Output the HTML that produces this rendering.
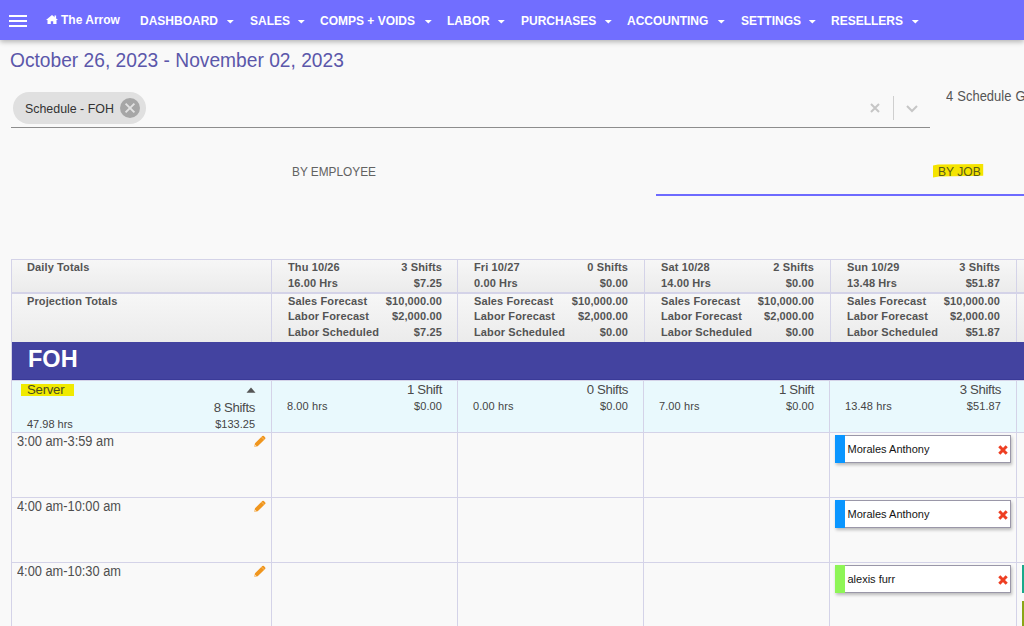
<!DOCTYPE html>
<html><head><meta charset="utf-8">
<style>
*{box-sizing:border-box;margin:0;padding:0}
html,body{width:1024px;height:626px;overflow:hidden;background:#f9f9f9;font-family:"Liberation Sans",sans-serif;position:relative}
.a{position:absolute;white-space:nowrap}
#nav{position:absolute;left:0;top:0;width:1024px;height:40px;background:#716eff;box-shadow:0 2px 5px rgba(0,0,0,.28)}
.ham{position:absolute;left:9px;width:18px;height:2px;background:#fff}
.ni{position:absolute;top:14px;font-size:12px;font-weight:bold;color:#fff;line-height:14px;white-space:nowrap}
.car{position:absolute;top:20px;width:7px;height:3.6px;background:#fff;clip-path:polygon(0 0,100% 0,50% 100%);margin-left:-0.2px}
.col{position:absolute;top:259px;width:1px;height:367px;background:#d4d3e8}
.hr{position:absolute;left:11px;width:1013px;height:1px;background:#d4d3e8}
.hc{position:absolute;font-size:11px;font-weight:bold;color:#545454;letter-spacing:0.12px;line-height:13px;white-space:nowrap}
.r{text-align:right}
.card{position:absolute;width:176px;height:28px;background:#fff;border:1px solid #9a97a8;box-shadow:1px 2px 3px rgba(0,0,0,.25)}
.card .bar{position:absolute;left:-1px;top:-1px;bottom:-1px;width:10px}
.card .nm{position:absolute;left:11.5px;top:7px;font-size:11px;color:#141414;line-height:13px;white-space:nowrap}
.card .x{position:absolute;right:2px;top:8.5px;width:10px;height:10px}
.pen{position:absolute;left:254px;width:12px;height:11px}
.tm{position:absolute;left:17px;font-size:14px;transform:scaleX(0.915);transform-origin:0 0;color:#4e4e4e;line-height:16px;white-space:nowrap}
</style></head><body>
<div id="nav">
  <div class="ham" style="top:15px"></div>
  <div class="ham" style="top:20px"></div>
  <div class="ham" style="top:25px"></div>
  <svg class="a" style="left:46px;top:14.5px" width="12" height="9" viewBox="0 0 12 9"><path d="M6 0 L12 5 L10.5 5 L10.5 9 L7.2 9 L7.2 6.3 L4.8 6.3 L4.8 9 L1.5 9 L1.5 5 L0 5 Z" fill="#fff"/><rect x="8.5" y="0.5" width="1.6" height="3" fill="#fff"/></svg>
  <div class="ni" style="left:61px;top:13px">The Arrow</div>
  <div class="ni" style="left:140px">DASHBOARD</div><div class="car" style="left:227px"></div>
  <div class="ni" style="left:250px">SALES</div><div class="car" style="left:298px"></div>
  <div class="ni" style="left:320px">COMPS + VOIDS</div><div class="car" style="left:425px"></div>
  <div class="ni" style="left:447px">LABOR</div><div class="car" style="left:498px"></div>
  <div class="ni" style="left:521px">PURCHASES</div><div class="car" style="left:605px"></div>
  <div class="ni" style="left:627px">ACCOUNTING</div><div class="car" style="left:718px"></div>
  <div class="ni" style="left:741px">SETTINGS</div><div class="car" style="left:809px"></div>
  <div class="ni" style="left:831px">RESELLERS</div><div class="car" style="left:912px"></div>
</div>

<div class="a" style="left:10px;top:49px;font-size:19.8px;line-height:22px;color:#5b57aa;transform:scaleX(0.97);transform-origin:0 0">October 26, 2023 - November 02, 2023</div>

<!-- chip -->
<div class="a" style="left:13px;top:92px;width:133px;height:32px;border-radius:16px;background:#e0e0e0"></div>
<div class="a" style="left:25px;top:102px;font-size:12.4px;line-height:14px;color:#333">Schedule - FOH</div>
<svg class="a" style="left:120px;top:98px" width="20" height="20" viewBox="0 0 20 20"><circle cx="10" cy="10" r="10" fill="#a6a6a6"/><path d="M5.6 5.6 L14.4 14.4 M14.4 5.6 L5.6 14.4" stroke="#e2e2e2" stroke-width="1.9"/></svg>
<div class="a" style="left:11px;top:127px;width:919px;height:1px;background:#8d8d8d"></div>
<svg class="a" style="left:870px;top:103px" width="10" height="10" viewBox="0 0 10 10"><path d="M1 1 L9 9 M9 1 L1 9" stroke="#c6c6c6" stroke-width="2"/></svg>
<div class="a" style="left:893px;top:96px;width:1px;height:24px;background:#cfcfcf"></div>
<svg class="a" style="left:906px;top:105px" width="12" height="8" viewBox="0 0 12 8"><path d="M1 1 L6 6 L11 1" stroke="#c6c6c6" stroke-width="2" fill="none"/></svg>
<div class="a" style="left:946px;top:89px;font-size:14px;line-height:15px;color:#555;word-spacing:0.6px;transform:scaleX(0.925);transform-origin:0 0">4 Schedule Groups</div>

<!-- tabs -->
<div class="a" style="left:292px;top:165px;font-size:13px;line-height:14px;color:#626262;transform:scaleX(0.91);transform-origin:0 0">BY EMPLOYEE</div>
<svg class="a" style="left:933px;top:164px" width="51" height="15" viewBox="0 0 51 15"><path d="M0 1.6 L5 0.6 L50.2 0 L50.2 11.7 L6 12.4 L0 13.6 Z" fill="#f5e400"/></svg>
<div class="a" style="left:938px;top:165px;font-size:13px;transform:scaleX(0.93);transform-origin:0 0;line-height:14px;color:#5a5a1a">BY JOB</div>
<div class="a" style="left:656px;top:194px;width:368px;height:2px;background:#6e6bff"></div>

<!-- table header bg -->
<div class="a" style="left:11px;top:259px;width:1013px;height:34px;background:linear-gradient(#f7f7f7,#ebebeb)"></div>
<div class="a" style="left:11px;top:293px;width:1013px;height:49px;background:linear-gradient(#f7f7f7,#ebebeb)"></div>
<div class="a" style="left:11px;top:380px;width:1013px;height:52px;background:#e9f9fd"></div>

<div class="hr" style="top:259px"></div>
<div class="hr" style="top:292px;height:2px"></div>
<div class="hr" style="top:380px"></div>
<div class="hr" style="top:432px"></div>
<div class="hr" style="top:497px"></div>
<div class="hr" style="top:562px"></div>

<div class="col" style="left:11px;top:259px;height:367px"></div>
<div class="col" style="left:271px;top:259px;height:83px"></div>
<div class="col" style="left:457px;top:259px;height:83px"></div>
<div class="col" style="left:644px;top:259px;height:83px"></div>
<div class="col" style="left:830px;top:259px;height:83px"></div>
<div class="col" style="left:1016px;top:259px;height:83px"></div>
<div class="col" style="left:271px;top:380px;height:246px"></div>
<div class="col" style="left:457px;top:380px;height:246px"></div>
<div class="col" style="left:643px;top:380px;height:246px"></div>
<div class="col" style="left:829px;top:380px;height:246px"></div>
<div class="col" style="left:1016px;top:380px;height:246px"></div>
<div class="a" style="left:12px;top:342px;width:1012px;height:38px;background:#4343a0"></div>
<div class="a" style="left:12px;top:379px;width:1012px;height:1px;background:#3a3a98"></div>

<div class="hc" style="left:27px;top:261px">Daily Totals</div>
<div class="hc" style="left:27px;top:295px">Projection Totals</div>

<!-- FOH -->
<div class="a" style="left:28px;top:345px;font-size:23.5px;font-weight:bold;color:#fff;line-height:28px">FOH</div>

<!-- server row -->
<div class="a" style="left:21px;top:384px;width:53px;height:12px;background:#f0ea00"></div>
<div class="a" style="left:27px;top:383px;font-size:13.2px;letter-spacing:-0.25px;line-height:14px;color:#4a4a20">Server</div>
<svg class="a" style="left:246px;top:387px" width="10" height="6" viewBox="0 0 10 6"><path d="M0.5 5.8 L5 0.4 L9.5 5.8 Z" fill="#555"/></svg>
<div class="a r" style="right:769px;top:400px;font-size:13.2px;letter-spacing:-0.35px;line-height:15px;color:#4a4a4a">8 Shifts</div>
<div class="a" style="left:27px;top:418px;font-size:11px;line-height:13px;color:#444">47.98 hrs</div>
<div class="a r" style="right:769px;top:418px;font-size:11px;line-height:13px;color:#444">$133.25</div>

<div id="days">
<div class="hc" style="left:288px;top:261px">Thu 10/26</div><div class="hc r" style="right:582px;top:261px">3 Shifts</div>
<div class="hc" style="left:288px;top:277px">16.00 Hrs</div><div class="hc r" style="right:582px;top:277px">$7.25</div>
<div class="hc" style="left:288px;top:295px">Sales Forecast</div><div class="hc r" style="right:582px;top:295px">$10,000.00</div>
<div class="hc" style="left:288px;top:310px">Labor Forecast</div><div class="hc r" style="right:582px;top:310px">$2,000.00</div>
<div class="hc" style="left:288px;top:326px">Labor Scheduled</div><div class="hc r" style="right:582px;top:326px">$7.25</div>
<div class="a r" style="right:582px;top:382px;font-size:13.2px;letter-spacing:-0.35px;line-height:15px;color:#4a4a4a">1 Shift</div>
<div class="a" style="left:287px;top:400px;font-size:11px;letter-spacing:0.1px;line-height:13px;color:#444">8.00 hrs</div><div class="a r" style="right:582px;top:400px;font-size:11px;letter-spacing:0.1px;line-height:13px;color:#444">$0.00</div>
<div class="hc" style="left:474px;top:261px">Fri 10/27</div><div class="hc r" style="right:396px;top:261px">0 Shifts</div>
<div class="hc" style="left:474px;top:277px">0.00 Hrs</div><div class="hc r" style="right:396px;top:277px">$0.00</div>
<div class="hc" style="left:474px;top:295px">Sales Forecast</div><div class="hc r" style="right:396px;top:295px">$10,000.00</div>
<div class="hc" style="left:474px;top:310px">Labor Forecast</div><div class="hc r" style="right:396px;top:310px">$2,000.00</div>
<div class="hc" style="left:474px;top:326px">Labor Scheduled</div><div class="hc r" style="right:396px;top:326px">$0.00</div>
<div class="a r" style="right:396px;top:382px;font-size:13.2px;letter-spacing:-0.35px;line-height:15px;color:#4a4a4a">0 Shifts</div>
<div class="a" style="left:473px;top:400px;font-size:11px;letter-spacing:0.1px;line-height:13px;color:#444">0.00 hrs</div><div class="a r" style="right:396px;top:400px;font-size:11px;letter-spacing:0.1px;line-height:13px;color:#444">$0.00</div>
<div class="hc" style="left:661px;top:261px">Sat 10/28</div><div class="hc r" style="right:210px;top:261px">2 Shifts</div>
<div class="hc" style="left:661px;top:277px">14.00 Hrs</div><div class="hc r" style="right:210px;top:277px">$0.00</div>
<div class="hc" style="left:661px;top:295px">Sales Forecast</div><div class="hc r" style="right:210px;top:295px">$10,000.00</div>
<div class="hc" style="left:661px;top:310px">Labor Forecast</div><div class="hc r" style="right:210px;top:310px">$2,000.00</div>
<div class="hc" style="left:661px;top:326px">Labor Scheduled</div><div class="hc r" style="right:210px;top:326px">$0.00</div>
<div class="a r" style="right:210px;top:382px;font-size:13.2px;letter-spacing:-0.35px;line-height:15px;color:#4a4a4a">1 Shift</div>
<div class="a" style="left:659px;top:400px;font-size:11px;letter-spacing:0.1px;line-height:13px;color:#444">7.00 hrs</div><div class="a r" style="right:210px;top:400px;font-size:11px;letter-spacing:0.1px;line-height:13px;color:#444">$0.00</div>
<div class="hc" style="left:847px;top:261px">Sun 10/29</div><div class="hc r" style="right:24px;top:261px">3 Shifts</div>
<div class="hc" style="left:847px;top:277px">13.48 Hrs</div><div class="hc r" style="right:24px;top:277px">$51.87</div>
<div class="hc" style="left:847px;top:295px">Sales Forecast</div><div class="hc r" style="right:24px;top:295px">$10,000.00</div>
<div class="hc" style="left:847px;top:310px">Labor Forecast</div><div class="hc r" style="right:24px;top:310px">$2,000.00</div>
<div class="hc" style="left:847px;top:326px">Labor Scheduled</div><div class="hc r" style="right:24px;top:326px">$51.87</div>
<div class="a r" style="right:23px;top:382px;font-size:13.2px;letter-spacing:-0.35px;line-height:15px;color:#4a4a4a">3 Shifts</div>
<div class="a" style="left:845px;top:400px;font-size:11px;letter-spacing:0.1px;line-height:13px;color:#444">13.48 hrs</div><div class="a r" style="right:23px;top:400px;font-size:11px;letter-spacing:0.1px;line-height:13px;color:#444">$51.87</div>
<div class="card" style="left:835px;top:435px"><div class="bar" style="background:#0a96ff"></div><div class="nm">Morales Anthony</div><svg class="x" viewBox="0 0 10 10"><path d="M1.3 1.3 L8.7 8.7 M8.7 1.3 L1.3 8.7" stroke="#ee3f22" stroke-width="3"/></svg></div>
<div class="card" style="left:835px;top:500px"><div class="bar" style="background:#0a96ff"></div><div class="nm">Morales Anthony</div><svg class="x" viewBox="0 0 10 10"><path d="M1.3 1.3 L8.7 8.7 M8.7 1.3 L1.3 8.7" stroke="#ee3f22" stroke-width="3"/></svg></div>
<div class="card" style="left:835px;top:565px"><div class="bar" style="background:#8ef556"></div><div class="nm">alexis furr</div><svg class="x" viewBox="0 0 10 10"><path d="M1.3 1.3 L8.7 8.7 M8.7 1.3 L1.3 8.7" stroke="#ee3f22" stroke-width="3"/></svg></div>
<div class="a" style="left:1022px;top:565px;width:2px;height:28px;background:#19a98a"></div>
<div class="a" style="left:1022px;top:601px;width:2px;height:25px;background:#8aa616"></div>
<svg class="pen" style="top:436px;overflow:visible" viewBox="0 0 12 11"><path d="M0.3 10.7 L1.0 7.3 L8.3 0 Q9.1 -0.7 9.9 0.1 L11.2 1.4 Q11.9 2.2 11.1 3.0 L3.7 10.3 Z" fill="#f0961e"/><path d="M7.4 0.9 L10.3 3.8" stroke="#fbd6a0" stroke-width="0.6"/><path d="M1.1 8.7 L2.4 10.0 L0.6 10.5 Z" fill="#fde3c0"/></svg>
<svg class="pen" style="top:501px;overflow:visible" viewBox="0 0 12 11"><path d="M0.3 10.7 L1.0 7.3 L8.3 0 Q9.1 -0.7 9.9 0.1 L11.2 1.4 Q11.9 2.2 11.1 3.0 L3.7 10.3 Z" fill="#f0961e"/><path d="M7.4 0.9 L10.3 3.8" stroke="#fbd6a0" stroke-width="0.6"/><path d="M1.1 8.7 L2.4 10.0 L0.6 10.5 Z" fill="#fde3c0"/></svg>
<svg class="pen" style="top:566px;overflow:visible" viewBox="0 0 12 11"><path d="M0.3 10.7 L1.0 7.3 L8.3 0 Q9.1 -0.7 9.9 0.1 L11.2 1.4 Q11.9 2.2 11.1 3.0 L3.7 10.3 Z" fill="#f0961e"/><path d="M7.4 0.9 L10.3 3.8" stroke="#fbd6a0" stroke-width="0.6"/><path d="M1.1 8.7 L2.4 10.0 L0.6 10.5 Z" fill="#fde3c0"/></svg>
</div>

<div class="tm" style="top:433px">3:00 am-3:59 am</div>
<div class="tm" style="top:498px">4:00 am-10:00 am</div>
<div class="tm" style="top:563px">4:00 am-10:30 am</div>
</body></html>
